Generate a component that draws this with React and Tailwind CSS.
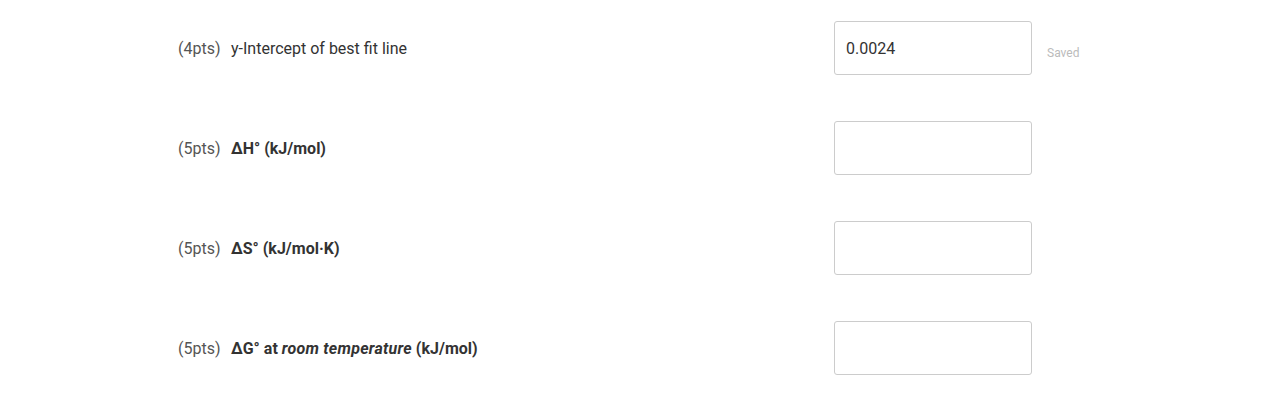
const rows = [
  { pts: 4, label: <span>y-Intercept of best fit line</span>, value: '0.0024', saved: true },
  { pts: 5, label: <b className="font-bold">ΔH° (kJ/mol)</b> },
  { pts: 5, label: <b className="font-bold">ΔS° (kJ/mol·K)</b> },
  {
    pts: 5,
    label: (
      <b className="font-bold">
        ΔG° at <i className="tracking-[0.25px]">room temperature</i> (kJ/mol)
      </b>
    ),
  },
];

export default function App() {
  return (
    <div className="min-h-[404px] bg-white pl-[178px] pt-[21px] font-['Roboto',sans-serif] text-[16px] text-[#333]">
      <div className="flex flex-col gap-[46px]">
        {rows.map((r, i) => (
          <div key={i} className="flex h-[54px] items-center">
            <div className="flex w-[656px] items-center pt-[2px]">
              <span className="w-[53px] text-[#555]">({r.pts}pts)</span>
              {r.label}
            </div>
            <input
              className="h-[54px] w-[198px] rounded-[3px] border border-[#ccc] px-[11px] pt-[1px] text-[16px] text-[#333] outline-none"
              defaultValue={r.value || ''}
            />
            {r.saved && <span className="ml-[15px] mt-[10px] text-[12px] text-[#bbb]">Saved</span>}
          </div>
        ))}
      </div>
    </div>
  );
}
